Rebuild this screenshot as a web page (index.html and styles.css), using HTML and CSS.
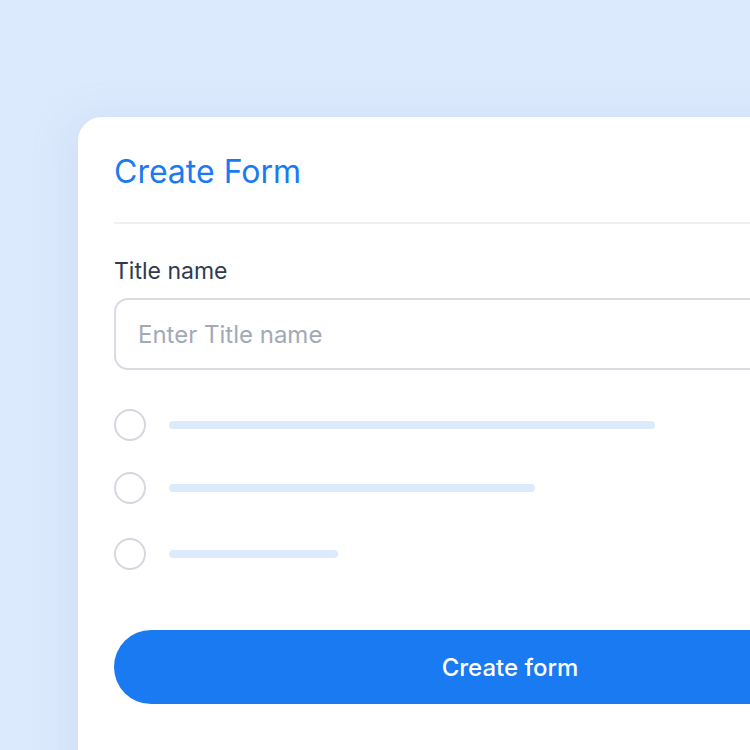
FILE: index.html
```html
<!DOCTYPE html>
<html lang="en">

<head>
    <meta charset="UTF-8">
    <meta name="viewport" content="width=device-width, initial-scale=1.0">
    <title>Create Form</title>
    <link rel="stylesheet" href="styles.css">
</head>

<body>
    <div class="card">
        <h1 class="card-title">Create Form</h1>
        <div class="divider"></div>
        <label class="field-label" for="title-name">Title name</label>
        <input class="field-input" id="title-name" type="text" placeholder="Enter Title name">
        <ul class="options">
            <li class="option">
                <span class="radio"></span>
                <span class="line" style="width: 486px"></span>
            </li>
            <li class="option">
                <span class="radio"></span>
                <span class="line" style="width: 366px"></span>
            </li>
            <li class="option">
                <span class="radio"></span>
                <span class="line" style="width: 169px"></span>
            </li>
        </ul>
        <button class="create-btn">Create form</button>
    </div>
</body>

</html>
```

FILE: styles.css
```css
html,
body {
    height: 100%;
}

body {
    margin: 0;
    padding: 117px 0 0 78px;
    box-sizing: border-box;
    background-color: #dceafd;
    font-family: Inter, "Noto Sans", sans-serif;
    overflow: hidden;
}

.card {
    width: 864px;
    height: 700px;
    box-sizing: border-box;
    padding: 36px 36px 0 36px;
    background: #fff;
    border-radius: 24px;
    box-shadow: -10px 0 40px rgba(120, 150, 200, 0.12);
}

.card-title {
    margin: 0;
    color: #1a7af2;
    font-size: 32px;
    font-weight: 400;
    line-height: 38px;
}

.divider {
    height: 2px;
    background-color: #f0f0f2;
    margin: 31px 0 33px 0;
}

.field-label {
    display: block;
    color: #2f3a4d;
    font-size: 23px;
    line-height: 28px;
    margin-bottom: 13px;
}

.field-input {
    display: block;
    width: 100%;
    height: 72px;
    box-sizing: border-box;
    border: 2px solid #d8dbe2;
    border-radius: 14px;
    padding: 0 22px;
    font-family: inherit;
    font-size: 24px;
    color: #2f3a4d;
    outline: none;
}

.field-input::placeholder {
    color: #a3a9b7;
}

.options {
    list-style: none;
    margin: 39px 0 0 0;
    padding: 0;
}

.option {
    display: flex;
    align-items: center;
    gap: 23px;
    height: 32px;
    margin-bottom: 31px;
}

.option:nth-child(2) {
    margin-bottom: 34px;
}

.radio {
    width: 28px;
    height: 28px;
    border: 2px solid #d4d7de;
    border-radius: 50%;
    flex-shrink: 0;
}

.line {
    height: 8px;
    border-radius: 4px;
    background-color: #dceafd;
}

.create-btn {
    display: block;
    width: 792px;
    height: 74px;
    margin-top: 60px;
    border: none;
    border-radius: 37px;
    background-color: #1a7af2;
    color: #fff;
    font-family: inherit;
    font-size: 24px;
    font-weight: 500;
}
```
